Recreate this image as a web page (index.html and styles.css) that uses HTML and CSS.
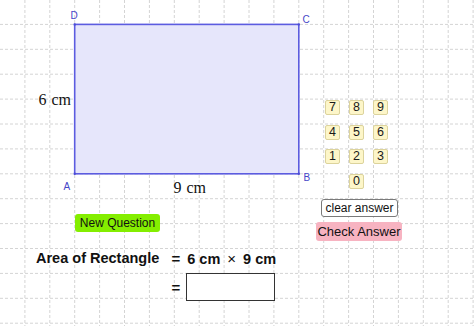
FILE: index.html
```html
<!DOCTYPE html>
<html>
<head>
<meta charset="utf-8">
<link rel="stylesheet" href="styles.css">
</head>
<body>
<div class="applet">
  <svg class="board" width="474" height="326" viewBox="0 0 474 326" xmlns="http://www.w3.org/2000/svg">
    <g class="grid">
      <path d="M24.9 0V326M49.8 0V326M74.7 0V326M99.6 0V326M124.5 0V326M149.4 0V326M174.3 0V326M199.2 0V326M224.1 0V326M249 0V326M273.9 0V326M298.8 0V326M323.7 0V326M348.6 0V326M373.5 0V326M398.4 0V326M423.3 0V326M448.2 0V326M473.1 0V326"/>
      <path d="M0 24.4H474M0 49.3H474M0 74.2H474M0 99.1H474M0 124H474M0 148.9H474M0 173.8H474M0 198.7H474M0 223.6H474M0 248.5H474M0 273.4H474M0 298.3H474M0 323.2H474"/>
    </g>
    <rect class="shape" x="74.7" y="24.4" width="224.1" height="149.4"/>
    <g class="pts">
      <circle cx="74.7" cy="24.4" r="1.2"/>
      <circle cx="298.8" cy="24.4" r="1.2"/>
      <circle cx="74.7" cy="173.8" r="1.2"/>
      <circle cx="298.8" cy="173.8" r="1.2"/>
    </g>
    <g class="vlabel">
      <text x="70.5" y="18.5">D</text>
      <text x="302.5" y="23">C</text>
      <text x="63.5" y="189.5">A</text>
      <text x="303.5" y="181">B</text>
    </g>
    <g class="dim">
      <text x="38.5" y="105">6 cm</text>
      <text x="173.5" y="193">9 cm</text>
    </g>
  </svg>

  <div class="controls">
    <div class="keypad">
      <button class="key">7</button>
      <button class="key">8</button>
      <button class="key">9</button>
      <button class="key">4</button>
      <button class="key">5</button>
      <button class="key">6</button>
      <button class="key">1</button>
      <button class="key">2</button>
      <button class="key">3</button>
      <button class="key key-zero">0</button>
    </div>
    <button class="btn btn-clear">clear answer</button>
    <button class="btn btn-check">Check Answer</button>
  </div>

  <button class="btn btn-new">New Question</button>

  <div class="eq">
    <div class="eq-label">Area of Rectangle</div>
    <div class="eq-rhs"><span class="op">=</span><span class="term">6 cm</span><span class="times">×</span><span class="term">9 cm</span></div>
    <div class="eq-empty"></div>
    <div class="eq-answer"><span class="op">=</span><div class="answer-box"></div></div>
  </div>
</div>
</body>
</html>
```

FILE: styles.css
```css
html, body {
  margin: 0;
  padding: 0;
  background: #ffffff;
}

.applet {
  position: relative;
  width: 474px;
  height: 326px;
  overflow: hidden;
  background: #ffffff;
  font-family: "Liberation Sans", Arial, sans-serif;
}

.board {
  position: absolute;
  left: 0;
  top: 0;
  display: block;
}

.grid path {
  fill: none;
  stroke: #d4d4d4;
  stroke-width: 1;
  stroke-dasharray: 3 2;
}

.shape {
  fill: #e6e6fb;
  stroke: #5c5ce0;
  stroke-width: 1.6;
}

.pts circle {
  fill: #4b4bd6;
}

.vlabel text {
  font-family: "Liberation Sans", Arial, sans-serif;
  font-size: 10px;
  fill: #4646c8;
}

.dim text {
  font-family: "Liberation Serif", "Times New Roman", serif;
  font-size: 16px;
  fill: #111111;
  word-spacing: 1px;
}

.controls {
  position: absolute;
  left: 316px;
  top: 100px;
  width: 86px;
  display: flex;
  flex-direction: column;
  align-items: center;
}

.keypad {
  display: grid;
  grid-template-columns: repeat(3, 15px);
  grid-auto-rows: 15px;
  column-gap: 9px;
  row-gap: 9.5px;
  margin-right: 5px;
  margin-bottom: 10px;
}

.key {
  width: 15px;
  height: 15px;
  margin: 0;
  padding: 0;
  border: 1px solid #dcd39c;
  border-radius: 2px;
  background: #fdf6c9;
  font-family: "Liberation Sans", Arial, sans-serif;
  font-size: 12.5px;
  line-height: 13px;
  color: #1a1a1a;
  text-align: center;
}

.key-zero {
  grid-column: 2;
}

.btn {
  margin: 0;
  padding: 0;
  box-sizing: border-box;
  font-family: "Liberation Sans", Arial, sans-serif;
  font-size: 12px;
  color: #111111;
  border-radius: 3px;
  text-align: center;
}

.btn-clear {
  width: 77px;
  height: 18px;
  line-height: 16px;
  background: #ffffff;
  border: 1px solid #7a7a7a;
  margin-left: 1px;
}

.btn-check {
  width: 86px;
  height: 19px;
  line-height: 19px;
  margin-top: 5px;
  background: #f7b3c1;
  border: none;
  font-size: 13px;
  white-space: nowrap;
}

.btn-new {
  position: absolute;
  left: 75px;
  top: 214px;
  width: 85px;
  height: 18px;
  line-height: 18px;
  background: #84ee00;
  border: none;
}

.eq {
  position: absolute;
  left: 36px;
  top: 250px;
  display: grid;
  grid-template-columns: 135.5px auto;
  row-gap: 5px;
  font-weight: bold;
  font-size: 14.5px;
  color: #111111;
}

.eq-label,
.eq-rhs {
  line-height: 17px;
  white-space: nowrap;
}

.eq-rhs {
  display: flex;
  align-items: baseline;
  gap: 7px;
}

.times {
  font-weight: normal;
  font-size: 15px;
}

.eq-answer {
  display: flex;
  align-items: center;
  gap: 6px;
}

.op {
  font-size: 15px;
}

.answer-box {
  width: 89px;
  height: 28px;
  box-sizing: border-box;
  border: 1px solid #333333;
  background: #ffffff;
}
```
